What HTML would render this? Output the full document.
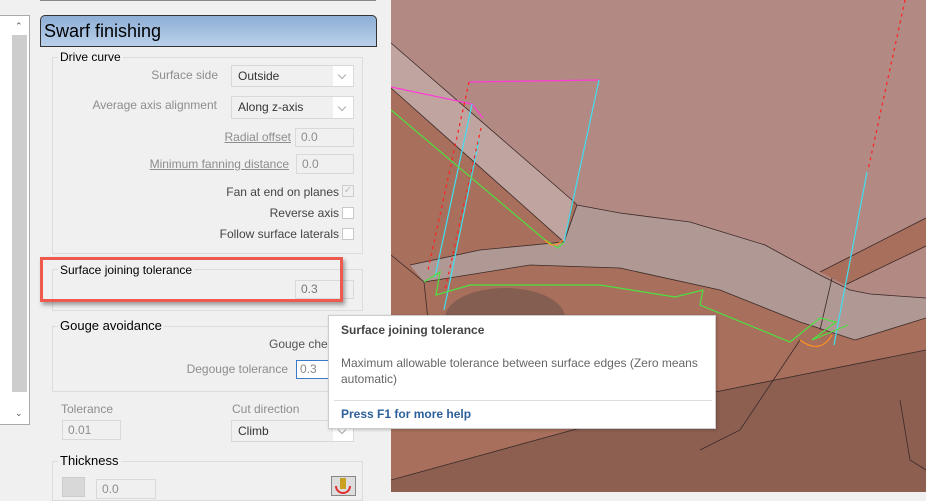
<!DOCTYPE html>
<html><head><meta charset="utf-8"><style>
*{margin:0;padding:0;box-sizing:border-box}
body{width:926px;height:492px;overflow:hidden;background:#f0f0f0;font-family:"Liberation Sans",sans-serif;font-size:12px;position:relative;color:#000}
.a{position:absolute}
.g{color:#8d8d8d}
.box{position:absolute;border:1px solid #dcdcdc}
.leg{position:absolute;background:#f0f0f0;padding:0 2px;font-size:12px;line-height:14px}
.inp{position:absolute;border:1px solid #d9d9d9;background:#f0f0f0;color:#8d8d8d;padding-left:5px;font-size:12px}
.sel{position:absolute;border:1px solid #d9d9d9;background:#fff;padding-left:6px;font-size:12px;color:#333}
.sel i{position:absolute;right:0;top:0;width:20px;height:100%;background:#fff}
.sel i:after{content:"";position:absolute;left:6px;top:calc(50% - 4px);width:5px;height:5px;border-right:1px solid #aaa;border-bottom:1px solid #aaa;transform:rotate(45deg)}
.sel span{position:absolute;left:0;top:0;bottom:0;right:20px;background:#f0f0f0;padding-left:6px}
.cb{position:absolute;width:12px;height:12px;border:1px solid #c8c8c8;background:#fff}
.r{position:absolute;text-align:right}
</style></head><body>
<div class="a" style="left:0;top:15px;width:30px;height:410px;background:#fff;border:1px solid #aaa;border-left:none"></div>
<div class="a" style="left:12px;top:35px;width:15px;height:357px;background:#cdcdcd"></div>
<div class="a" style="left:15px;top:21px;font-size:9px;color:#555">&#8963;</div>
<div class="a" style="left:15px;top:408px;font-size:9px;color:#555">&#8964;</div>
<div class="a" style="left:40px;top:0;width:336px;height:1px;background:#888"></div>
<div class="a" style="left:40px;top:15px;width:337px;height:32px;border:1px solid #333;border-radius:5px 5px 0 0;background:linear-gradient(#8eaed5,#b9d0ea);font-size:18px;line-height:30px;padding-left:3px">Swarf finishing</div>
<div class="box" style="left:52px;top:57px;width:311px;height:197px"></div>
<div class="leg" style="left:58px;top:50px">Drive curve</div>
<div class="r g" style="left:100px;width:118px;top:68px">Surface side</div>
<div class="sel" style="left:231px;top:65px;width:123px;height:22px"><span style="line-height:20px">Outside</span><i></i></div>
<div class="r g" style="left:60px;width:157px;top:98px">Average axis alignment</div>
<div class="sel" style="left:231px;top:96px;width:123px;height:23px"><span style="line-height:21px">Along z-axis</span><i></i></div>
<div class="r g" style="left:150px;width:141px;top:130px;text-decoration:underline">Radial offset</div>
<div class="inp" style="left:295px;top:128px;width:59px;height:19px;line-height:17px">0.0</div>
<div class="r g" style="left:100px;width:189px;top:157px;text-decoration:underline">Minimum fanning distance</div>
<div class="inp" style="left:296px;top:154px;width:58px;height:20px;line-height:18px">0.0</div>
<div class="r" style="left:150px;width:189px;top:185px;color:#444">Fan at end on planes</div>
<div class="cb" style="left:342px;top:185px;background:#f0f0f0;border-color:#ccc;color:#bbb;font-size:10px;line-height:10px;text-align:center">&#10003;</div>
<div class="r" style="left:150px;width:189px;top:206px;color:#444">Reverse axis</div>
<div class="cb" style="left:342px;top:207px"></div>
<div class="r" style="left:150px;width:189px;top:227px;color:#444">Follow surface laterals</div>
<div class="cb" style="left:342px;top:228px"></div>
<div class="box" style="left:52px;top:269px;width:311px;height:42px"></div>
<div class="leg" style="left:58px;top:263px">Surface joining tolerance</div>
<div class="inp" style="left:295px;top:280px;width:59px;height:19px;line-height:17px;color:#777">0.3</div>
<div class="a" style="left:40px;top:257px;width:303px;height:45px;border:3px solid #ee5a4e;box-shadow:2px 3px 4px rgba(0,0,0,.35)"></div>
<div class="box" style="left:52px;top:326px;width:311px;height:66px"></div>
<div class="leg" style="left:58px;top:319px;font-size:13px">Gouge avoidance</div>
<div class="a" style="left:269px;top:337px;color:#555">Gouge chec</div>
<div class="r g" style="left:150px;width:138px;top:362px">Degouge tolerance</div>
<div class="a" style="left:296px;top:360px;width:40px;height:19px;border:1px solid #3a78c8;background:#fff;padding-left:3px;line-height:17px;color:#888">0.3</div>
<div class="a g" style="left:61px;top:402px">Tolerance</div>
<div class="inp" style="left:62px;top:420px;width:59px;height:20px;line-height:18px">0.01</div>
<div class="a g" style="left:232px;top:402px">Cut direction</div>
<div class="sel" style="left:231px;top:420px;width:123px;height:22px"><span style="line-height:20px">Climb</span><i></i></div>
<div class="box" style="left:52px;top:461px;width:311px;height:40px"></div>
<div class="leg" style="left:58px;top:454px;font-size:13px">Thickness</div>
<div class="a" style="left:62px;top:477px;width:23px;height:20px;background:#d8d8d8;border:1px solid #ccc"></div>
<div class="inp" style="left:96px;top:479px;width:60px;height:20px;line-height:18px">0.0</div>
<div class="a" style="left:331px;top:476px;width:25px;height:20px;border:1px solid #888;background:#ddd"><div class="a" style="left:8px;top:1px;width:6px;height:11px;background:#c9a020"></div><div class="a" style="left:3px;top:9px;width:16px;height:8px;border:2px solid #e03030;border-top:none;border-radius:0 0 8px 8px"></div></div>
<svg class="a" style="left:391px;top:0" width="535" height="492" viewBox="391 0 535 492">
<rect x="391" y="0" width="535" height="492" fill="#a86f5c"/>
<polygon points="391,0 926,0 926,298 870,294 850,290 820,275 765,245 690,222 620,213 577,205 572,200 391,43" fill="#b38983"/>
<polygon points="820,272 926,218 926,246 845,285" fill="#a86f5c"/>
<polygon points="391,43 572,200 564,242 391,88" fill="#c0a4a0"/>
<polygon points="410,265 480,250 564,242 577,205 620,213 690,222 765,245 820,275 850,290 870,294 926,298 926,318 855,340 800,322 720,290 620,268 530,265 424,282" fill="#b09994"/>
<ellipse cx="505" cy="318" rx="60" ry="30" fill="#855e52"/>
<polygon points="391,480 700,395 926,350 926,492 391,492" fill="#8c5f51"/>
<g stroke="#3a2a28" stroke-width="0.8" fill="none">
<polyline points="391,43 572,200 577,205 620,213 690,222 765,245 820,275 850,290 870,294 926,298"/>
<polyline points="391,88 564,242 577,205"/>
<polyline points="410,265 480,250 564,242"/>
<polyline points="424,282 530,265 620,268 720,290 800,322 855,340 926,318"/>
<polyline points="820,272 926,218"/><polyline points="845,285 926,246"/>
<polyline points="832,278 820,330"/>
<polyline points="391,255 424,282 428,320"/>
<polyline points="800,340 740,430 700,450"/>
<polyline points="391,480 700,395 926,350"/>
<polyline points="900,400 910,460 926,470"/>
</g>
<g fill="none" stroke-width="1.2">
<polyline points="391,87 472,104 483,118" stroke="#ff3ad8"/>
<polyline points="469,82 599,80" stroke="#ff3ad8"/>
<polyline points="599,80 564,242" stroke="#40e0f0"/>
<polyline points="472,104 435,277" stroke="#40e0f0"/>
<polyline points="479,140 444,310" stroke="#40e0f0"/>
<polyline points="867,172 834,345" stroke="#40e0f0"/>
<polyline points="469,82 428,270" stroke="#ff2020" stroke-dasharray="3,4"/>
<polyline points="481,128 445,290" stroke="#ff2020" stroke-dasharray="3,4"/>
<polyline points="905,0 868,170" stroke="#ff2020" stroke-dasharray="3,4"/>
<polyline points="391,110 545,240 558,248 564,242" stroke="#4ee040"/>
<polyline points="424,282 440,272 436,295 470,285 600,285 675,297 703,290 700,305 790,342 820,318 836,322 812,340 848,325" stroke="#4ee040"/>
<path d="M545 240 q8 10 18 0" stroke="#ff9020"/>
<path d="M800 340 q20 15 32 -5" stroke="#ff9020"/>
</g>
</svg>
<div class="a" style="left:328px;top:315px;width:388px;height:114px;background:#fff;border:1px solid #ccc;box-shadow:1px 1px 3px rgba(0,0,0,.2)">
<div class="a" style="left:12px;top:7px;font-weight:bold;color:#444">Surface joining tolerance</div>
<div class="a" style="left:12px;top:39px;width:370px;color:#666;line-height:16px">Maximum allowable tolerance between surface edges (Zero means automatic)</div>
<div class="a" style="left:5px;top:84px;width:378px;height:1px;background:#ddd"></div>
<div class="a" style="left:12px;top:91px;font-weight:bold;color:#2d5f9a">Press F1 for more help</div>
</div>
</body></html>
